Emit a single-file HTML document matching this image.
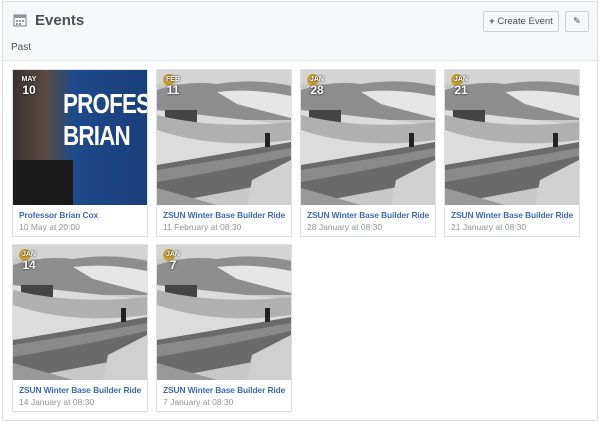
<!DOCTYPE html><html><head><style>
body{margin:0;width:600px;height:425px;background:#fff;font-family:"Liberation Sans",Arial,sans-serif;overflow:hidden}
.box{position:absolute;left:2px;top:1px;width:594px;height:418px;border:1px solid #dddfe2;background:#fff}
.hd{position:absolute;left:0;top:0;width:594px;height:58px;background:#f6f7f9;border-bottom:1px solid #e5e5e5}
.t{position:absolute;left:32px;top:10px;font-size:15px;font-weight:bold;color:#4b4f56}
.past{position:absolute;left:8px;top:40px;font-size:10px;color:#4b4f56}
.btn{position:absolute;top:9px;height:19px;border:1px solid #ced0d4;background:#f6f7f9;border-radius:2px;font-size:9.5px;color:#4b4f56;line-height:19px;text-align:center}
.card{position:absolute;width:134px;height:166px;border:1px solid #dddfe2;background:#fff}
.img{position:absolute;left:0;top:0;width:134px;height:135px;overflow:hidden}
.d{position:absolute;left:8px;top:6px;color:#fff;font-weight:bold;text-shadow:0 0 2px #000;text-align:center;width:16px}
.d small{display:block;font-size:7px;line-height:8px}
.d b{display:block;font-size:12px;line-height:12px}
.nm{position:absolute;left:6px;top:140px;font-size:8.4px;font-weight:bold;color:#4267b2;white-space:nowrap;letter-spacing:-0.1px}
.dt{position:absolute;left:6px;top:152px;font-size:8.5px;color:#90949c;white-space:nowrap}
</style></head><body>
<svg width="0" height="0" style="position:absolute"><defs><symbol id="ls" viewBox="0 0 134 135">
<rect width="134" height="135" fill="#c8c8c8"/>
<rect width="134" height="14" fill="#d4d4d4"/>
<path d="M0 20 Q30 10 60 14 Q100 8 134 16 L134 50 L0 50Z" fill="#8e8e8e"/>
<path d="M60 22 Q95 18 134 26 L134 48 Q110 42 80 34Z" fill="#e6e6e6"/>
<path d="M0 40 L134 55 L134 110 L0 100Z" fill="#dcdcdc"/>
<rect x="8" y="40" width="32" height="14" fill="#444"/>
<path d="M0 45 Q60 60 134 52 L134 70 Q60 80 0 60Z" fill="#b0b0b0"/>
<path d="M0 95 Q60 85 134 72 L134 110 Q80 120 0 135Z" fill="#6a6a6a"/>
<path d="M0 100 Q50 92 100 84 L134 78 L134 86 Q70 100 0 112Z" fill="#8a8a8a"/>
<path d="M95 110 L134 90 L134 135 L90 135Z" fill="#d0d0d0"/>
<path d="M0 118 L60 135 L0 135Z" fill="#999"/>
<rect x="108" y="63" width="5" height="14" fill="#222"/>
<circle cx="12" cy="10" r="6" fill="#c9a13a"/>
</symbol></defs></svg>
<div class="box">
<div class="hd">
<svg style="position:absolute;left:10px;top:11px" width="14" height="14" viewBox="0 0 14 14"><rect x="1" y="2" width="12" height="11" fill="none" stroke="#90949c" stroke-width="1.2"/><rect x="1" y="2" width="12" height="3" fill="#90949c"/><g fill="#90949c"><rect x="3" y="7" width="2" height="2"/><rect x="6" y="7" width="2" height="2"/><rect x="9" y="7" width="2" height="2"/><rect x="3" y="10" width="2" height="2"/><rect x="6" y="10" width="2" height="2"/></g></svg>
<div class="t">Events</div>
<div class="past">Past</div>
<div class="btn" style="left:480px;width:74px"><b>+</b> Create Event</div>
<div class="btn" style="left:562px;width:22px">✎</div>
</div>
</div>
<div class="card" style="left:12px;top:69px"><div class="img" style="background:linear-gradient(90deg,#3a3230 0,#5a4a44 25%,#1d4a8a 45%,#1a3f7a 100%)"><div style="position:absolute;left:50px;top:18px;font-size:28px;color:#fff;font-weight:bold;letter-spacing:-1px;transform:scaleX(.8);transform-origin:left">PROFES<br>BRIAN</div><div style="position:absolute;left:0;top:90px;width:60px;height:45px;background:#1a1a1a"></div></div><div class="d"><small>MAY</small><b>10</b></div><div class="nm">Professor Brian Cox</div><div class="dt">10 May at 20:00</div></div>
<div class="card" style="left:156px;top:69px"><svg class="img"><use href="#ls"/></svg><div class="d"><small>FEB</small><b>11</b></div><div class="nm">ZSUN Winter Base Builder Ride</div><div class="dt">11 February at 08:30</div></div>
<div class="card" style="left:300px;top:69px"><svg class="img"><use href="#ls"/></svg><div class="d"><small>JAN</small><b>28</b></div><div class="nm">ZSUN Winter Base Builder Ride</div><div class="dt">28 January at 08:30</div></div>
<div class="card" style="left:444px;top:69px"><svg class="img"><use href="#ls"/></svg><div class="d"><small>JAN</small><b>21</b></div><div class="nm">ZSUN Winter Base Builder Ride</div><div class="dt">21 January at 08:30</div></div>
<div class="card" style="left:12px;top:244px"><svg class="img"><use href="#ls"/></svg><div class="d"><small>JAN</small><b>14</b></div><div class="nm">ZSUN Winter Base Builder Ride</div><div class="dt">14 January at 08:30</div></div>
<div class="card" style="left:156px;top:244px"><svg class="img"><use href="#ls"/></svg><div class="d"><small>JAN</small><b>7</b></div><div class="nm">ZSUN Winter Base Builder Ride</div><div class="dt">7 January at 08:30</div></div>
</body></html>
